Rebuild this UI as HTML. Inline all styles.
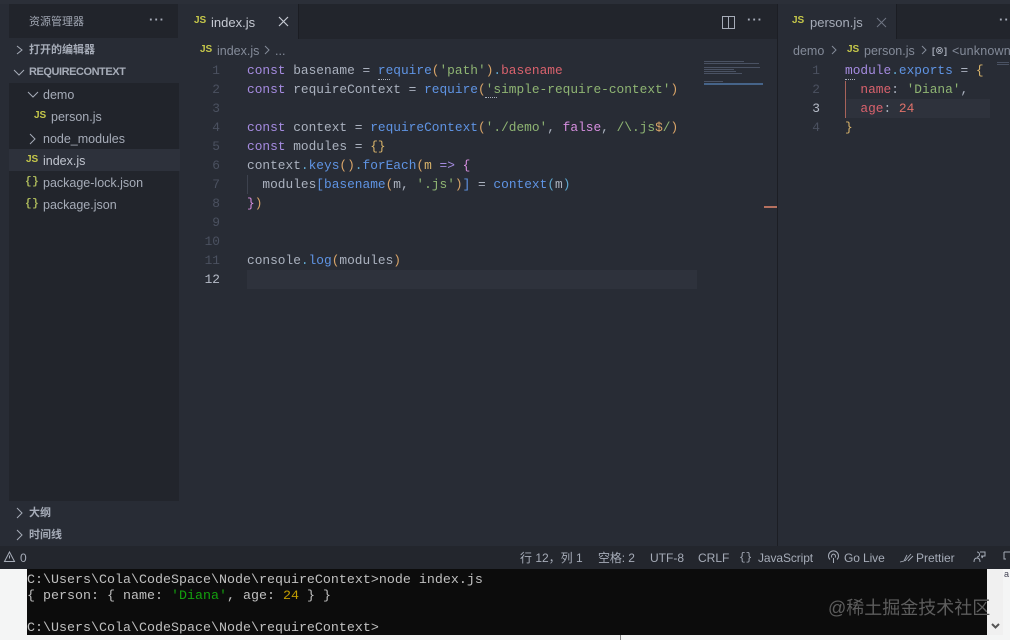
<!DOCTYPE html>
<html><head><meta charset="utf-8"><style>
html,body{margin:0;padding:0}
body{width:1010px;height:640px;overflow:hidden;position:relative;background:#f4f5f5;font-family:"Liberation Sans","Noto Sans CJK SC",sans-serif}
.a{position:absolute}
.t{position:absolute;white-space:pre;color:#a6acb8;font-size:12.5px;line-height:18px;letter-spacing:0}
.js{position:absolute;white-space:pre;color:#c5c74a;font-size:10px;font-weight:bold;line-height:14px}
.j{position:absolute;white-space:pre;color:#a9b65a;font-size:11px;font-weight:bold;line-height:14px;letter-spacing:.5px;font-family:"Liberation Mono",monospace}
.c{position:absolute;white-space:pre;font-family:"Liberation Mono",monospace;font-size:12.83px;line-height:19px;color:#abb2bf}
.n{position:absolute;white-space:pre;font-family:"Liberation Mono",monospace;font-size:12.83px;line-height:19px;color:#4b5160;text-align:right;width:30px}
.k{color:#a58be0}.f{color:#5f94e4}.s{color:#8fb573}.r{color:#d9626d}.o{color:#d8a468}.g{color:#d78fe0}.b{color:#8a94d8}.y{color:#d8b36a}.w{color:#9aa2b0}.u{color:#5fa8d0}
.term{position:absolute;white-space:pre;font-family:"Liberation Mono",monospace;font-size:13.33px;line-height:16px;color:#c0c0c0}
svg{position:absolute;overflow:visible}
svg path{fill:none;stroke:#a6acb8;stroke-width:1}
</style></head><body>
<!-- backgrounds -->
<div class="a" style="left:0;top:0;width:1010px;height:569px;background:#282c35"></div>
<div class="a" style="left:0;top:0;width:1010px;height:4px;background:#2b2f38"></div>
<div class="a" style="left:9px;top:4px;width:169px;height:34px;background:#21242b"></div>
<div class="a" style="left:9px;top:83px;width:170px;height:66px;background:#21242b"></div>
<div class="a" style="left:9px;top:149px;width:171px;height:22px;background:#2d313b"></div>
<div class="a" style="left:9px;top:171px;width:170px;height:330px;background:#22252c"></div>
<div class="a" style="left:180px;top:4px;width:830px;height:35px;background:#22252c"></div>
<div class="a" style="left:180px;top:4px;width:118px;height:35px;background:#282c35"></div>
<div class="a" style="left:298px;top:4px;width:1px;height:35px;background:#1b1d23"></div>
<div class="a" style="left:778px;top:4px;width:118px;height:35px;background:#282c35"></div>
<div class="a" style="left:896px;top:4px;width:1px;height:35px;background:#1b1d23"></div>
<div class="a" style="left:777px;top:4px;width:1px;height:542px;background:#1c1e24"></div>
<div class="a" style="left:0;top:546px;width:1010px;height:23px;background:#23262d"></div>
<!-- current line -->
<div class="a" style="left:247px;top:270px;width:450px;height:19px;background:#2e323c"></div>
<div class="a" style="left:845px;top:99px;width:145px;height:19px;background:#2e323c"></div>
<!-- sidebar -->
<div class="t" style="left:29px;top:13px;font-size:11px;color:#a0a6b2">资源管理器</div>
<div class="t" style="left:149px;top:11px;font-size:13px;letter-spacing:1px;font-weight:bold">···</div>
<svg style="left:0;top:0" width="180" height="230"><path d="M17 46l5 4-5 4M14 70l5 5 5-5M28 92l5 5 5-5M30 134l5 5-5 5"/></svg>
<div class="t" style="left:29px;top:41px;font-size:11px;font-weight:bold">打开的编辑器</div>
<div class="t" style="left:29px;top:63px;font-size:11px;font-weight:bold;letter-spacing:-.45px">REQUIRECONTEXT</div>
<div class="t" style="left:43px;top:86px">demo</div>
<div class="js" style="left:34px;top:109px">JS</div>
<div class="t" style="left:51px;top:108px">person.js</div>
<div class="t" style="left:43px;top:130px">node_modules</div>
<div class="js" style="left:26px;top:153px">JS</div>
<div class="t" style="left:43px;top:152px;color:#c0c5cf">index.js</div>
<div class="j" style="left:25px;top:175px">{}</div>
<div class="t" style="left:43px;top:174px">package-lock.json</div>
<div class="j" style="left:25px;top:197px">{}</div>
<div class="t" style="left:43px;top:196px">package.json</div>
<svg style="left:0;top:500px" width="40" height="46"><path d="M17 8l5 5-5 5M17 30l5 5-5 5"/></svg>
<div class="t" style="left:29px;top:504px;font-size:11px;font-weight:bold">大纲</div>
<div class="t" style="left:29px;top:526px;font-size:11px;font-weight:bold">时间线</div>
<!-- tabs -->
<div class="js" style="left:194px;top:14px">JS</div>
<div class="t" style="left:211px;top:14px;color:#c6cad3;font-size:13px">index.js</div>
<svg style="left:0;top:0" width="300" height="40"><path d="M279 17l9 9M288 17l-9 9" style="stroke:#c6cad3;stroke-width:1.2"/></svg>
<svg style="left:0;top:0" width="780" height="40"><path d="M722.5 16.500h12v12h-12zM728.500 16.500v12"/></svg>
<div class="t" style="left:747px;top:11px;font-size:13px;letter-spacing:1px;font-weight:bold">···</div>
<div class="js" style="left:792px;top:14px">JS</div>
<div class="t" style="left:810px;top:14px;font-size:13px">person.js</div>
<svg style="left:0;top:0" width="900" height="40"><path d="M877 18l9 9M886 18l-9 9" style="stroke:#6f7583"/></svg>
<div class="t" style="left:999px;top:11px;font-size:13px;letter-spacing:1px;font-weight:bold">···</div>
<!-- breadcrumb -->
<div class="js" style="left:200px;top:43px">JS</div>
<div class="t" style="left:217px;top:42px;color:#848b99">index.js</div>
<svg style="left:0;top:0" width="300" height="60"><path d="M265 46l4 4-4 4" style="stroke:#848b99"/></svg>
<div class="t" style="left:275px;top:42px;color:#848b99">...</div>
<div class="t" style="left:793px;top:42px;color:#848b99">demo</div>
<svg style="left:0;top:0" width="900" height="60"><path d="M832 46l4 4-4 4M922 46l4 4-4 4" style="stroke:#848b99"/></svg>
<div class="js" style="left:847px;top:43px">JS</div>
<div class="t" style="left:864px;top:42px;color:#848b99">person.js</div>
<div class="t" style="left:932px;top:42px;color:#a6acb8;font-size:9px;font-weight:bold">[⊗]</div>
<div class="t" style="left:952px;top:42px;color:#848b99;letter-spacing:.2px">&lt;unknown</div>
<!-- line numbers left -->
<div class="n" style="left:190px;top:61px">1
2
3
4
5
6
7
8
9
10
11
<span style="color:#b6bcc8">12</span></div>
<!-- left code -->
<div class="c" style="left:247px;top:61px"><span class="k">const</span> basename = <span class="f">require</span><span class="o">(</span><span class="s">'path'</span><span class="o">)</span><span class="u">.</span><span class="r">basename</span>
<span class="k">const</span> requireContext = <span class="f">require</span><span class="o">(</span><span class="s">'simple-require-context'</span><span class="o">)</span>

<span class="k">const</span> context = <span class="f">requireContext</span><span class="o">(</span><span class="s">'./demo'</span>, <span class="g">false</span>, <span class="s">/\.js</span><span class="o">$</span><span class="s">/</span><span class="o">)</span>
<span class="k">const</span> modules = <span class="y">{}</span>
context<span class="u">.</span><span class="f">keys</span><span class="o">()</span><span class="u">.</span><span class="f">forEach</span><span class="o">(</span><span class="y">m</span> <span class="k">=&gt;</span> <span class="g">{</span>
  modules<span class="f">[</span><span class="f">basename</span><span class="o">(</span>m, <span class="s">'.js'</span><span class="o">)</span><span class="f">]</span> = <span class="f">context</span><span class="u">(</span>m<span class="u">)</span>
<span class="g">}</span><span class="o">)</span>


console<span class="u">.</span><span class="f">log</span><span class="o">(</span>modules<span class="o">)</span></div>
<div class="a" style="left:247px;top:175px;width:1px;height:19px;background:#3d424e"></div>
<div class="a" style="left:378px;top:77px;color:#9aa2b0;font-size:0;width:12px;height:2px;border-bottom:1px dotted #aab0bc"></div>
<div class="a" style="left:485px;top:95px;width:12px;height:2px;border-bottom:1px dotted #aab0bc"></div>
<!-- minimap left -->
<div class="a" style="left:704px;top:61px;width:40px;height:1px;background:#4a5263"></div>
<div class="a" style="left:704px;top:63px;width:55px;height:1px;background:#4a5263"></div>
<div class="a" style="left:704px;top:67px;width:56px;height:1px;background:#4a5263"></div>
<div class="a" style="left:704px;top:69px;width:30px;height:1px;background:#4a5263"></div>
<div class="a" style="left:704px;top:71px;width:32px;height:1px;background:#4a5263"></div>
<div class="a" style="left:704px;top:73px;width:38px;height:1px;background:#4a5263"></div>
<div class="a" style="left:704px;top:81px;width:19px;height:1px;background:#4a5263"></div>
<div class="a" style="left:704px;top:83px;width:59px;height:2px;background:#466489"></div>
<div class="a" style="left:764px;top:206px;width:13px;height:2px;background:#b5705f"></div>
<!-- right pane -->
<div class="n" style="left:790px;top:61px">1
2
<span style="color:#b6bcc8">3</span>
4</div>
<div class="c" style="left:845px;top:61px"><span class="k">module</span><span class="u">.</span><span class="f">exports</span> = <span class="y">{</span>
  <span class="r">name</span>: <span class="s">'Diana'</span>,
  <span class="r">age</span>: <span class="o" style="color:#e0726a">24</span>
<span class="y">}</span></div>
<div class="a" style="left:845px;top:81px;width:1px;height:37px;background:#a8635a"></div>
<div class="a" style="left:845px;top:77px;width:10px;height:2px;border-bottom:1px dotted #aab0bc"></div>
<div class="a" style="left:997px;top:62px;width:12px;height:1px;background:#4a5263"></div>
<div class="a" style="left:997px;top:64px;width:12px;height:1px;background:#4a5263"></div>
<!-- status bar -->
<svg style="left:0;top:0" width="20" height="570"><path d="M9.500 552l5 9.500h-10zM9.500 555.500v3"/></svg>
<div class="t" style="left:20px;top:549px;font-size:12px">0</div>
<div class="t" style="left:520px;top:549px;font-size:12px">行 12，列 1</div>
<div class="t" style="left:598px;top:549px;font-size:12px;letter-spacing:-.1px">空格: 2</div>
<div class="t" style="left:650px;top:549px;font-size:12px">UTF-8</div>
<div class="t" style="left:698px;top:549px;font-size:12px">CRLF</div>
<div class="t" style="left:739px;top:549px;font-size:11px;letter-spacing:0;font-family:'Liberation Mono',monospace">{}</div>
<div class="t" style="left:758px;top:549px;font-size:12px;letter-spacing:-.1px">JavaScript</div>
<svg style="left:0;top:0" width="1010" height="570"><path d="M833.500 563v-5M830 559.500a5 5 0 1 1 7 0M832 557.500a2 2 0 1 1 3 0"/><path d="M900 562l4-1 3-6M905 561l6-7M908 561l5-5" style="stroke-width:.9"/><path d="M974 562c0-3 1-4 3-4s3 1 3 4M977 557a2.500 2.500 0 1 0 0-5M980 552h5v4h-2l-1 2v-2h-1" /><path d="M1004 552h6M1004 552v7h2" /></svg>
<div class="t" style="left:844px;top:549px;font-size:12px;letter-spacing:-.1px">Go Live</div>
<div class="t" style="left:916px;top:549px;font-size:12px">Prettier</div>
<!-- terminal -->
<div class="a" style="left:27px;top:569px;width:960px;height:66px;background:#0c0c0c"></div>
<div class="a" style="left:987px;top:569px;width:16px;height:66px;background:#f0f0f0"></div>
<div class="term" style="left:27px;top:573px">C:\Users\Cola\CodeSpace\Node\requireContext&gt;node index.js
{ person: { name: <span style="color:#13a10e">'Diana'</span>, age: <span style="color:#c19c00">24</span> } }

C:\Users\Cola\CodeSpace\Node\requireContext&gt;</div>
<svg style="left:0;top:0" width="1010" height="640"><path d="M992 624l3.500 3.500 3.500-3.500" style="stroke:#555;stroke-width:2"/></svg>
<div class="a" style="left:828px;top:596px;white-space:pre;color:#5d5d5d;font-size:18px;line-height:24px">@稀土掘金技术社区</div>
<div class="a" style="left:1004px;top:569px;color:#445;font-size:9px;line-height:10px">a</div>
<div class="a" style="left:620px;top:635px;width:1px;height:5px;background:#888"></div>
</body></html>
